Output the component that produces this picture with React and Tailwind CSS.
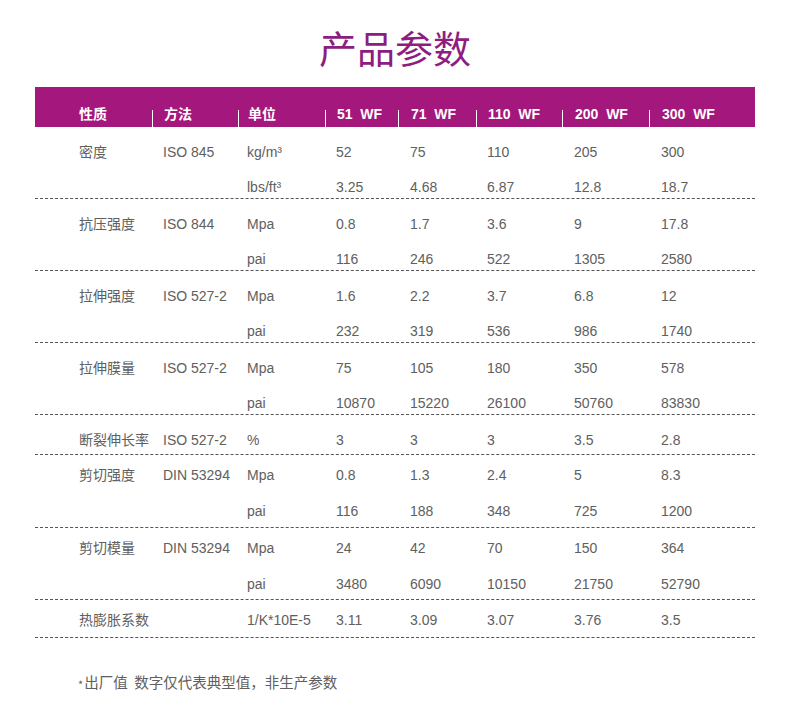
import React from 'react';

const FONT = { fontFamily: '"Liberation Sans", "Noto Sans CJK SC", Arial, sans-serif' };

// column left paddings line up header labels with the values below
const COLS = ['pl-[44px]', 'pl-[11px]', 'pl-[9px]', 'pl-[11px]', 'pl-[12px]', 'pl-[11px]', 'pl-[12px]', 'pl-[12px]'];
const GRID = 'grid grid-cols-[117px_86px_87px_73px_78px_86px_87px_106px]';

const HEADERS = ['性质', '方法', '单位', '51\u00a0\u00a0WF', '71\u00a0\u00a0WF', '110\u00a0\u00a0WF', '200\u00a0\u00a0WF', '300\u00a0\u00a0WF'];

const GROUPS = [
  {
    name: '密度', method: 'ISO 845', pad: 'pt-[14px] pb-0 gap-[13px]',
    rows: [
      ['kg/m³', '52', '75', '110', '205', '300'],
      ['lbs/ft³', '3.25', '4.68', '6.87', '12.8', '18.7'],
    ],
  },
  {
    name: '抗压强度', method: 'ISO 844', pad: 'pt-[14px] pb-0 gap-[13px]',
    rows: [
      ['Mpa', '0.8', '1.7', '3.6', '9', '17.8'],
      ['pai', '116', '246', '522', '1305', '2580'],
    ],
  },
  {
    name: '拉伸强度', method: 'ISO 527-2', pad: 'pt-[14px] pb-0 gap-[13px]',
    rows: [
      ['Mpa', '1.6', '2.2', '3.7', '6.8', '12'],
      ['pai', '232', '319', '536', '986', '1740'],
    ],
  },
  {
    name: '拉伸膜量', method: 'ISO 527-2', pad: 'pt-[14px] pb-0 gap-[13px]',
    rows: [
      ['Mpa', '75', '105', '180', '350', '578'],
      ['pai', '10870', '15220', '26100', '50760', '83830'],
    ],
  },
  {
    name: '断裂伸长率', method: 'ISO 527-2', pad: 'pt-[14px] pb-[3px]',
    rows: [['%', '3', '3', '3', '3.5', '2.8']],
  },
  {
    name: '剪切强度', method: 'DIN 53294', pad: 'pt-[9px] pb-[5px] gap-[14px]',
    rows: [
      ['Mpa', '0.8', '1.3', '2.4', '5', '8.3'],
      ['pai', '116', '188', '348', '725', '1200'],
    ],
  },
  {
    name: '剪切模量', method: 'DIN 53294', pad: 'pt-[9px] pb-[4px] gap-[14px]',
    rows: [
      ['Mpa', '24', '42', '70', '150', '364'],
      ['pai', '3480', '6090', '10150', '21750', '52790'],
    ],
  },
  {
    name: '热膨胀系数', method: '', pad: 'pt-[9px] pb-[6px]',
    rows: [['1/K*10E-5', '3.11', '3.09', '3.07', '3.76', '3.5']],
  },
];

const HeaderBar = () => (
  <div className={`${GRID} h-[40px] items-end bg-[#a4177c] text-white text-[14px] font-bold`}>
    {HEADERS.map((h, i) => (
      <div key={h} className={`h-[17px] ${i > 0 ? 'border-l border-white' : ''} ${COLS[i]}`}>
        <span className="block leading-[17px] -mt-[4px] whitespace-nowrap">{h}</span>
      </div>
    ))}
  </div>
);

const Group = ({ group }) => (
  <div className={`flex flex-col border-b border-dashed border-[#555] ${group.pad}`}>
    {group.rows.map((row, r) => {
      const cells = [r === 0 ? group.name : '', r === 0 ? group.method : '', ...row];
      return (
        <div key={r} className={`${GRID} leading-[22px]`}>
          {cells.map((c, i) => (
            <div key={i} className={`whitespace-nowrap ${COLS[i]}`}>{c}</div>
          ))}
        </div>
      );
    })}
  </div>
);

export default function App() {
  return (
    <div className="w-[790px] min-h-[728px] bg-white" style={FONT}>
      <h1 className="pt-[28px] mb-[21px] text-center text-[38px] leading-[38px] font-normal text-[#8d1d80]"
        style={{ fontFamily: '"Noto Sans CJK SC", sans-serif' }}>
        产品参数
      </h1>
      <div className="mx-[35px]">
        <HeaderBar />
        <div className="text-[14px] text-[#606060]">
          {GROUPS.map((g) => (
            <Group key={g.name} group={g} />
          ))}
        </div>
        <p className="mt-[33px] pl-[43px] text-[14.5px] leading-[22px] text-[#606060]"
          style={{ fontFamily: '"Noto Sans CJK SC", sans-serif' }}>
          <span className="text-[11px] align-[-1px] mr-[1px]">*</span>出厂值&nbsp; 数字仅代表典型值，非生产参数
        </p>
      </div>
    </div>
  );
}
